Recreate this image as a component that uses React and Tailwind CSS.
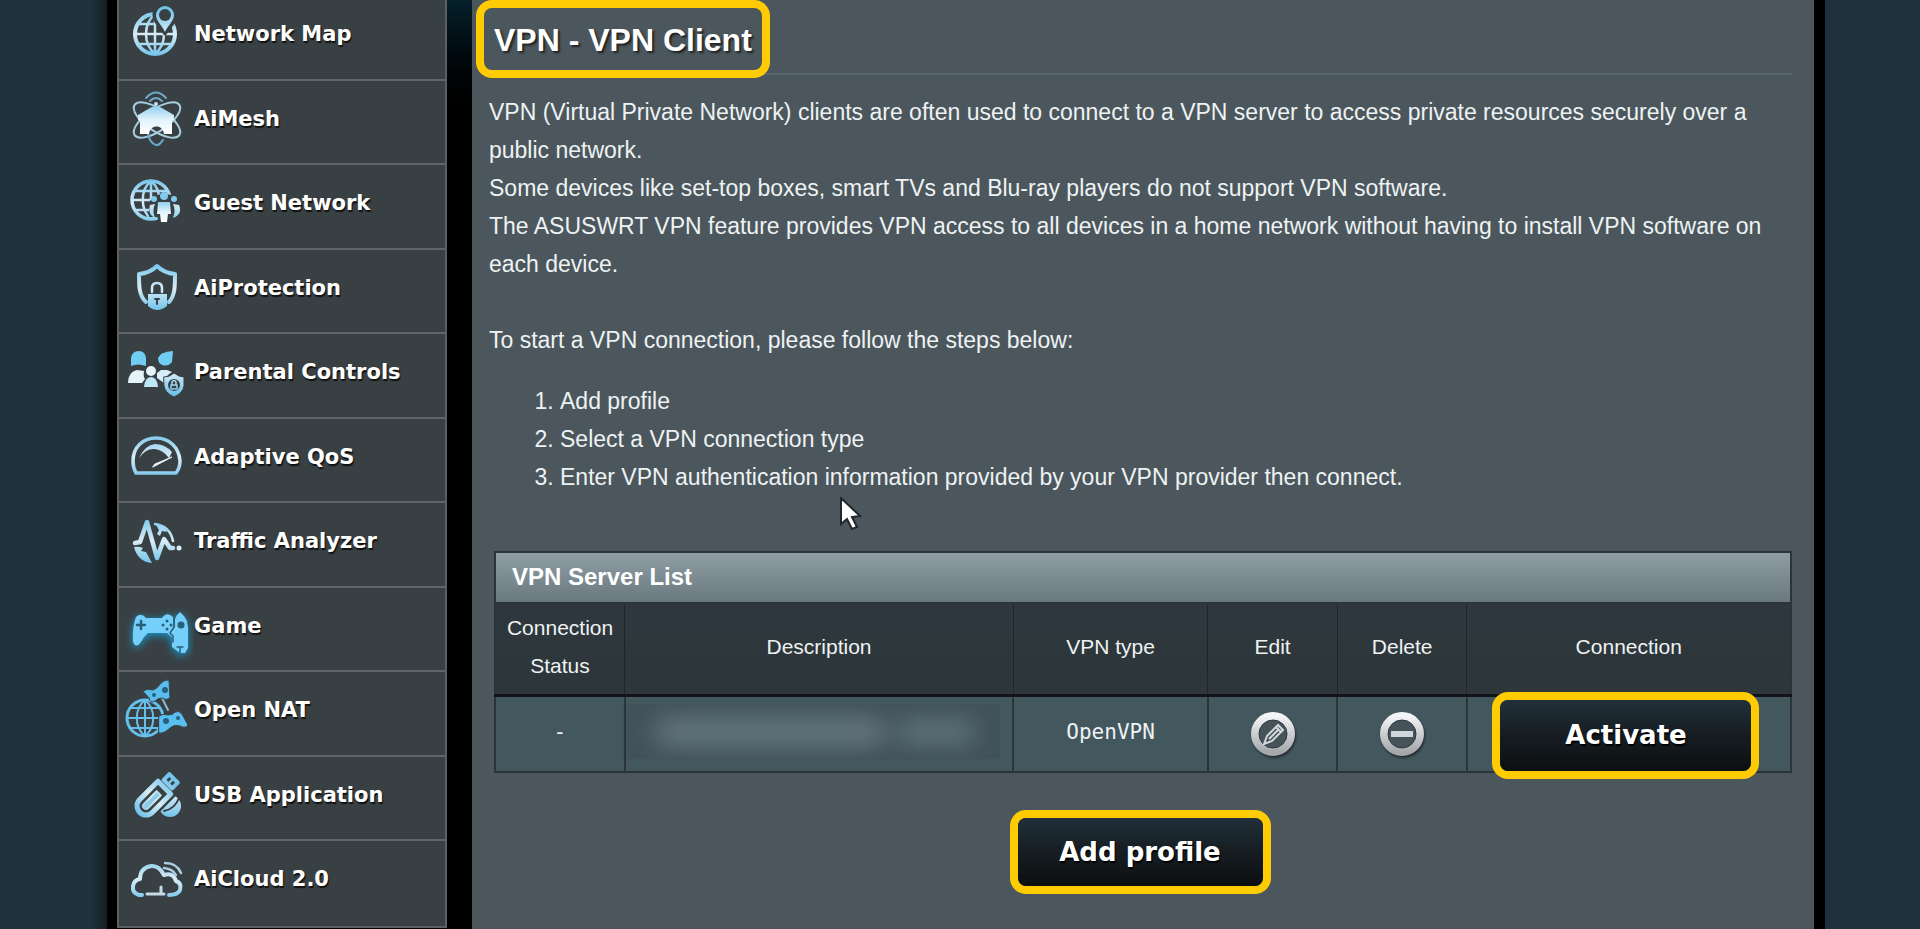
const menu = [
    { label: "Network Map", icon: <NetworkMapIcon /> },
    { label: "AiMesh", icon: <AiMeshIcon /> },
    { label: "Guest Network", icon: <GuestIcon /> },
    { label: "AiProtection", icon: <ProtectionIcon /> },
    { label: "Parental Controls", icon: <ParentalIcon /> },
    { label: "Adaptive QoS", icon: <QosIcon /> },
    { label: "Traffic Analyzer", icon: <TrafficIcon /> },
    { label: "Game", icon: <GameIcon /> },
    { label: "Open NAT", icon: <OpenNatIcon /> },
    { label: "USB Application", icon: <UsbIcon /> },
    { label: "AiCloud 2.0", icon: <CloudIcon /> },
]

function Icon({ children }) {
    return (
        <svg viewBox="0 0 75 84" className="h-[84px] w-[75px] shrink-0" fill="none" stroke="url(#ice)" strokeLinecap="round" strokeLinejoin="round" aria-hidden="true">
            {children}
        </svg>
    )
}

function NetworkMapIcon() {
    return (
        <Icon>
            <circle cx="36" cy="38" r="20" strokeWidth="4" />
            <path d="M36 18V58M36 18C24 28 24 48 36 58M36 18C48 28 48 48 36 58M17 38H56M20 28H52M20 48H52" strokeWidth="2.500" />
            <path d="M46 38C42 31 35 27 35 19A11 11 0 0 1 57 19C57 27 50 31 46 38Z" fill="#394043" stroke="#394043" strokeWidth="3" />
            <path d="M46 36C43 29 37 25 37 19A9 9 0 0 1 55 19C55 25 49 29 46 36Z" fill="url(#ice)" stroke="none" />
            <circle cx="46" cy="19" r="6" fill="#394043" stroke="none" />
        </Icon>
    )
}

function AiMeshIcon() {
    return (
        <Icon>
            <g strokeWidth="2">
                <path d="M27 17Q37 6 47 17M31 20Q37 14 43 20" stroke="#6ea9c6" />
                <ellipse cx="38" cy="39" rx="27" ry="11" transform="rotate(34 38 39)" stroke="#a9cfdf" />
                <ellipse cx="38" cy="39" rx="27" ry="11" transform="rotate(-34 38 39)" stroke="#a9cfdf" />
                <path d="M29 50C29 58 33 63 37 64S42 61 44 59" stroke="#66a9c8" />
            </g>
            <circle cx="37" cy="23" r="2" fill="#bfe6f7" stroke="none" />
            <path d="M19 34L31 27Q37 23 43 27L55 34V39L53 40V53H45C44 43 31 43 30 53H21V40L19 39Z" fill="url(#snow)" stroke="none" />
        </Icon>
    )
}

function GuestIcon() {
    return (
        <Icon>
            <circle cx="32" cy="35" r="19" strokeWidth="3.500" />
            <path d="M32 16V54M32 16C21 25 21 45 32 54M32 16C43 25 43 45 32 54M13 35H51M17 26H47M17 45H40" strokeWidth="2.500" />
            <path d="M31 38Q35 30 45 30Q56 30 61 38L60 51H51L49 57H41L39 51H31Z" fill="#394043" stroke="#394043" strokeWidth="2" />
            <g fill="url(#ice)" stroke="none">
                <circle cx="45" cy="31" r="4" fill="#7fcaed" />
                <circle cx="35" cy="34" r="3" fill="#7fcaed" />
                <circle cx="55" cy="34" r="3" fill="#7fcaed" />
                <path d="M39 37H51L52 49H49L48 57H42L41 49H38Z" fill="url(#snow)" />
                <path d="M36 39Q33 45 36 53Q28 49 31 40ZM54 39Q57 45 54 53Q64 49 60 40Z" />
            </g>
        </Icon>
    )
}

function ProtectionIcon() {
    return (
        <Icon>
            <path d="M27 52C20 46 20 36 20 24Q31 23 38 16Q45 23 56 24C56 36 56 46 50 52" strokeWidth="4" />
            <path d="M33 42V38Q33 33 38 33T43 38V42" strokeWidth="2.500" />
            <path d="M29 44H48V56Q38 64 29 56Z" fill="url(#ice)" stroke="none" />
            <path d="M38 49V54M36 49H40" stroke="#394043" strokeWidth="2" />
        </Icon>
    )
}

function ParentalIcon() {
    return (
        <Icon>
            <g stroke="none">
                <path d="M12 32V24Q13 17 20 17Q26 17 27 24V32Q19 29 12 32Z" fill="#72cdf5" />
                <path d="M39 24Q41 18 54 17L53 28Q49 33 43 31Q39 29 39 24Z" fill="#72cdf5" />
                <path d="M9 49Q9 38 18 36L25 37Q24 42 26 45L23 49Z" fill="#e6f4fa" />
                <path d="M38 39L42 36H48L53 38Q46 42 45 49L38 44Z" fill="#d5edf8" />
                <circle cx="32" cy="37" r="5" fill="#e6f4fa" />
                <path d="M25 53Q26 43 32 43T39 53Z" fill="#bfe6f7" />
            </g>
            <path d="M45 43Q51 43 55 39Q60 43 65 43V52Q64 59 55 63Q46 59 45 52Z" fill="url(#ice)" stroke="#394043" strokeWidth="1" />
            <circle cx="55" cy="51" r="6" fill="#394043" stroke="none" />
            <path d="M53 50V48Q55 45 57 48V50M52 51H58V55H52Z" strokeWidth="1.500" />
        </Icon>
    )
}

function QosIcon() {
    return (
        <Icon>
            <path d="M17 54H57Q61 49 61 42C60 28 50 19 37 19S14 28 14 42Q14 49 17 54Z" strokeWidth="3.500" />
            <path d="M20 39Q26 26 36 25Q46 25 53 33L50 39Q44 31 36 30Q27 29 20 39Z" fill="url(#ice)" stroke="none" />
            <path d="M34 48L53 38L36 45Z" fill="#e6f4fa" stroke="#e6f4fa" strokeWidth="1" />
        </Icon>
    )
}

function TrafficIcon() {
    return (
        <Icon>
            <path d="M15 44Q20 43 24 45L22 48L27 49L33 60Q19 59 15 44Z" fill="url(#ice)" stroke="none" />
            <path d="M36 21Q51 23 54 38" strokeWidth="2.500" />
            <path d="M37 22Q46 23 48 29L43 28L41 33L38 31L40 27Z" fill="url(#ice)" stroke="none" />
            <path d="M16 40L21 39L28 19L38 55L45 36L51 45H54" strokeWidth="4.500" />
            <circle cx="60" cy="45" r="2.500" fill="#d5edf8" stroke="none" />
        </Icon>
    )
}

function GameIcon() {
    return (
        <Icon>
            <g className="drop-shadow-[0_2px_4px_#159bd3]" stroke="none">
                <path d="M17 29Q22 24 27 30H43Q48 23 54 29V50L48 45H29Q24 49 22 54Q17 61 14 54Q13 39 17 29Z" fill="#74d0fa" />
                <path d="M53 44L56 38V31Q58 26 61 24Q66 28 68 33L69 40V60L66 65H61L53 59Z" fill="#74d0fa" />
            </g>
            <path d="M22 33V41M18 37H26" stroke="#28607c" strokeWidth="2.500" />
            <path d="M55 30V39L51 45L54 48V54M58 59H64M61 59V65" stroke="#28607c" strokeWidth="1.500" />
            <g fill="#28607c" stroke="none">
                <circle cx="48" cy="33" r="1.500" />
                <circle cx="48" cy="41" r="1.500" />
                <circle cx="44" cy="37" r="1.500" />
                <circle cx="52" cy="37" r="1.500" />
                <circle cx="62" cy="37" r="3.500" />
            </g>
        </Icon>
    )
}

function OpenNatIcon() {
    return (
        <Icon>
            <g stroke="#66bfea">
                <circle cx="26" cy="46" r="18" strokeWidth="3" />
                <path d="M26 28V64M26 28C15 37 15 55 26 64M26 28C37 37 37 55 26 64M8 46H44M12 36H40M12 56H40" strokeWidth="2" />
                <path d="M43 26L49 38" strokeWidth="2" stroke="#8fb9cd" />
            </g>
            <g fill="#58bdef" stroke="#394043" strokeWidth="1">
                <path d="M24 19Q28 16 34 18Q39 16 41 12Q46 7 50 8L51 26Q47 29 43 26Q39 26 36 29Q31 32 30 26Z" />
                <path d="M40 44Q44 41 49 43Q54 43 56 40Q60 38 63 42L69 53Q67 57 61 54Q55 52 51 56Q45 62 40 61Z" />
            </g>
            <g fill="#28607c" stroke="none">
                <circle cx="46" cy="18" r="3" />
                <circle cx="35" cy="23" r="2" />
                <circle cx="47" cy="49" r="3" />
                <circle cx="59" cy="46" r="2" />
            </g>
        </Icon>
    )
}

function UsbIcon() {
    return (
        <Icon>
            <circle cx="51" cy="49" r="11" fill="url(#ice)" stroke="none" />
            <path d="M45 54Q56 52 60 41" stroke="#394043" strokeWidth="2" />
            <g transform="rotate(45 27 49)">
                <path d="M17 22H37V49A10 10 0 0 1 17 49Z" fill="#394043" stroke="#394043" strokeWidth="8" />
                <path d="M18 23H36V49A9 9 0 0 1 18 49Z" fill="#394043" strokeWidth="5" />
                <path d="M24 31H30V49A3 3 0 0 1 24 49Z" fill="#8fcbe6" strokeWidth="2" />
                <path d="M21 10H33V18H21Z" strokeWidth="4" />
                <path d="M27 11V17" strokeWidth="2.500" />
            </g>
        </Icon>
    )
}

function CloudIcon() {
    return (
        <Icon>
            <path d="M23 54H20Q13 52 14 45Q15 39 21 38Q21 27 32 25Q40 24 45 34Q54 31 57 40Q63 42 61 49Q59 54 50 54" strokeWidth="4" />
            <path d="M46 22Q58 22 62 32M45 27Q54 28 57 34" strokeWidth="2.500" stroke="#a9cfdf" />
            <path d="M28 53H45M42 46V52" strokeWidth="3" stroke="#c3dbe6" />
        </Icon>
    )
}

function RoundIcon({ children }) {
    return (
        <svg viewBox="0 0 48 48" className="h-12 w-12 drop-shadow-[1px_2px_1px_#222c30]" fill="none" aria-hidden="true">
            <circle cx="24" cy="24" r="18" fill="#46545a" stroke="url(#metal)" strokeWidth="8" />
            <circle cx="24" cy="24" r="14" stroke="#2f3a3f" strokeWidth="1" />
            {children}
        </svg>
    )
}

function Sidebar() {
    return (
        <nav className="-mt-1 w-[330px] shrink-0 self-start border-2 border-t-0 border-[#5a6164] bg-[#394043]">
            {menu.map((item) => (
                <a
                    key={item.label}
                    href="#"
                    className="flex h-[84px] items-start border-b-2 border-[#5f6568] font-['DejaVu_Sans',sans-serif] text-[21px] leading-7 font-bold text-white last:border-b-0 odd:h-[85px] [text-shadow:1px_2px_1px_#111]"
                >
                    {item.icon}
                    <span className="pt-6 whitespace-nowrap">{item.label}</span>
                </a>
            ))}
        </nav>
    )
}

function ServerTable() {
    return (
        <table className="mt-[55px] w-full table-fixed border-collapse border-2 border-[#2b3438] text-center text-[21px] leading-[38px]">
            <caption className="h-[51px] border-2 border-b-0 border-[#2b3438] bg-linear-to-b from-[#8f9ea4] to-[#6a7880] px-4 text-left text-[24px] leading-[48px] font-bold text-white">
                VPN Server List
            </caption>
            <thead>
                <tr className="h-[92px] border-b-3 border-[#111518] bg-linear-to-b from-[#2e373e] to-[#2d3739]">
                    <th className="w-[10%] border-x border-[#1f262a] p-0 pb-1 font-normal">Connection Status</th>
                    <th className="w-[30%] border-x border-[#1f262a] p-0 pb-1 font-normal">Description</th>
                    <th className="w-[15%] border-x border-[#1f262a] p-0 pb-1 font-normal">VPN type</th>
                    <th className="w-[10%] border-x border-[#1f262a] p-0 pb-1 font-normal">Edit</th>
                    <th className="w-[10%] border-x border-[#1f262a] p-0 pb-1 font-normal">Delete</th>
                    <th className="w-[25%] border-x border-[#1f262a] p-0 pb-1 font-normal">Connection</th>
                </tr>
            </thead>
            <tbody>
                <tr className="h-[75px] bg-[#43575e]">
                    <td className="border-x-2 border-[#2b3438] p-0 pb-1 font-['DejaVu_Sans_Mono',monospace]">-</td>
                    <td className="border-x-2 border-[#2b3438] p-0 pb-1">
                        {/* hidden server name */}
                        <div className="-ml-1 mr-3 flex h-[55px] items-center gap-2 overflow-hidden bg-[#41525a] pr-6 pl-8">
                            <div className="h-7 flex-1 rounded-full bg-[#65777e] blur-md"></div>
                            <div className="h-6 w-20 rounded-full bg-[#61747b] blur-md"></div>
                        </div>
                    </td>
                    <td className="border-x-2 border-[#2b3438] p-0 pb-1 font-['DejaVu_Sans_Mono',monospace]">OpenVPN</td>
                    <td className="border-x-2 border-[#2b3438] p-0">
                        <button aria-label="Edit" className="mx-auto block">
                            <RoundIcon>
                                <path d="M15 34L18 26L29 15L34 20L23 31Z M20 29L30 19M27 17L32 22" stroke="#d5d8da" strokeWidth="2" />
                            </RoundIcon>
                        </button>
                    </td>
                    <td className="border-x-2 border-[#2b3438] p-0">
                        <button aria-label="Delete" className="mx-auto block">
                            <RoundIcon>
                                <path d="M13 24H35" stroke="#d0d6d9" strokeWidth="6" />
                            </RoundIcon>
                        </button>
                    </td>
                    <td className="border-x-2 border-[#2b3438] p-0 pt-[3px] pr-[6px]">
                        <ActionButton className="h-[71px] w-[251px]">Activate</ActionButton>
                    </td>
                </tr>
            </tbody>
        </table>
    )
}

function ActionButton({ className, children }) {
    return (
        <button className={`relative z-10 mx-auto block rounded-lg bg-linear-to-b from-[#20303a] via-[#161d22] to-[#0c0f11] font-['DejaVu_Sans',sans-serif] text-[26px] leading-8 font-bold text-white ring-8 ring-[#ffcc03] [text-shadow:1px_2px_1px_#000] ${className}`}>
            {children}
        </button>
    )
}

export default function App() {
    return (
        <div className="min-h-screen bg-[#1f313d] font-['Liberation_Sans',Arial,sans-serif]">
            {/* shared icon gradients */}
            <svg className="absolute h-0 w-0" aria-hidden="true">
                <defs>
                    <linearGradient id="ice" gradientUnits="userSpaceOnUse" x1="0" y1="14" x2="0" y2="62">
                        <stop offset="0" stopColor="#74c5ea" />
                        <stop offset="0.5" stopColor="#d9ecf6" />
                        <stop offset="1" stopColor="#66bfea" />
                    </linearGradient>
                    <linearGradient id="snow" x1="0" y1="0" x2="0" y2="1">
                        <stop offset="0" stopColor="#8fd0ef" />
                        <stop offset="0.5" stopColor="#e3f3fb" />
                        <stop offset="1" stopColor="#ffffff" />
                    </linearGradient>
                    <linearGradient id="metal" x1="0" y1="0" x2="0" y2="1">
                        <stop offset="0" stopColor="#f4f5f6" />
                        <stop offset="1" stopColor="#a4a8ab" />
                    </linearGradient>
                </defs>
            </svg>

            <div className="flex min-h-screen pr-[95px] pl-[91px]">
                <div className="w-4 shrink-0 bg-linear-to-r from-[#1f313d] to-[#161f24]"></div>
                <div className="flex min-w-0 flex-1 bg-black pr-[11px] pl-[10px]">
                    <Sidebar />
                    <div className="h-[130px] w-[25px] shrink-0 bg-linear-to-b from-[#06202a] to-black"></div>

                    <main className="min-w-0 flex-1 bg-[#4b575d] pr-[22px] pb-8 pl-3 text-[23px] leading-[38px] text-[#eef2f3]">
                        <header className="flex border-b-2 border-[#56656e] pt-2 pb-[3px]">
                            <h1 className="rounded-lg px-[10px] pt-[2px] text-[32px] leading-[60px] font-bold text-white ring-8 ring-[#ffcc03] [text-shadow:2px_2px_2px_#222]">
                                VPN - VPN Client
                            </h1>
                        </header>

                        <div className="pt-[18px] pl-[5px]">
                            <p>
                                VPN (Virtual Private Network) clients are often used to connect to a VPN server to access private resources securely over a public network.
                                <br />
                                Some devices like set-top boxes, smart TVs and Blu-ray players do not support VPN software.
                                <br />
                                The ASUSWRT VPN feature provides VPN access to all devices in a home network without having to install VPN software on each device.
                            </p>
                            <p className="mt-[38px]">To start a VPN connection, please follow the steps below:</p>
                            <div className="relative">
                                <ol className="mt-[23px] list-decimal pl-[71px]">
                                    <li>Add profile</li>
                                    <li>Select a VPN connection type</li>
                                    <li>Enter VPN authentication information provided by your VPN provider then connect.</li>
                                </ol>
                                {/* mouse pointer */}
                                <svg viewBox="0 0 22 34" className="absolute top-[115px] left-[351px] h-[34px] w-[22px]" aria-hidden="true">
                                    <path d="M1 1V27L7 22L12 32L17 30L12 20L20 19Z" fill="#fff" stroke="#20262c" strokeWidth="2" />
                                </svg>
                            </div>
                        </div>

                        <div className="pl-[10px]">
                            <ServerTable />
                        </div>

                        <div className="pt-[45px] pl-1">
                            <ActionButton className="h-[68px] w-[245px]">Add profile</ActionButton>
                        </div>
                    </main>
                </div>
            </div>
        </div>
    )
}
